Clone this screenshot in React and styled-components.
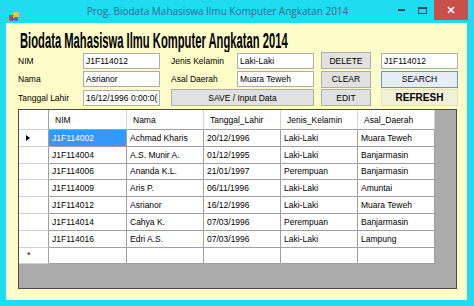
import React from 'react';
import styled, { createGlobalStyle } from 'styled-components';

const GlobalStyle = createGlobalStyle`
  html, body { margin: 0; padding: 0; }
  body {
    background: #1fdcf2;
    font-family: "Liberation Sans", Arial, sans-serif;
    overflow: hidden;
  }
`;

const columns = ['NIM', 'Nama', 'Tanggal_Lahir', 'Jenis_Kelamin', 'Asal_Daerah'];

const rows = [
    ['J1F114002', 'Achmad Kharis', '20/12/1996', 'Laki-Laki', 'Muara Teweh'],
    ['J1F114004', 'A.S. Munir A.', '01/12/1995', 'Laki-Laki', 'Banjarmasin'],
    ['J1F114006', 'Ananda K.L.', '21/01/1997', 'Perempuan', 'Banjarmasin'],
    ['J1F114009', 'Aris P.', '06/11/1996', 'Laki-Laki', 'Amuntai'],
    ['J1F114012', 'Asrianor', '16/12/1996', 'Laki-Laki', 'Muara Teweh'],
    ['J1F114014', 'Cahya K.', '07/03/1996', 'Perempuan', 'Banjarmasin'],
    ['J1F114016', 'Edri A.S.', '07/03/1996', 'Laki-Laki', 'Lampung'],
];

const AppIcon = () => (
    <svg width="10" height="10" viewBox="0 0 10 10">
        <rect x="0" y="3" width="5" height="5" fill="#d0463c" />
        <rect x="4" y="0" width="6" height="6" fill="#f2c230" />
        <rect x="5" y="5" width="4" height="4" fill="#3a78d0" />
        <rect x="1" y="6" width="3" height="3" fill="#7a4fb0" />
    </svg>
);

const App = () => {
    return (
        <>
            <GlobalStyle />
            <Window>
                <TitleBar>
                    <IconSlot><AppIcon /></IconSlot>
                    <Title>Prog. Biodata Mahasiswa Ilmu Komputer Angkatan 2014</Title>
                    <Controls>
                        <CtrlButton>
                            <svg width="7" height="3"><rect x="0" y="0" width="7" height="2" fill="#1d4a66" /></svg>
                        </CtrlButton>
                        <CtrlButton>
                            <svg width="9" height="7">
                                <rect x="0.5" y="0.5" width="8" height="6" fill="none" stroke="#1d4a66" />
                                <rect x="0" y="0" width="9" height="2" fill="#1d4a66" />
                            </svg>
                        </CtrlButton>
                        <CloseButton>
                            <svg width="8" height="8" viewBox="0 0 8 8">
                                <path d="M1 1 L7 7 M7 1 L1 7" stroke="#fff" strokeWidth="1.6" />
                            </svg>
                        </CloseButton>
                    </Controls>
                </TitleBar>

                <Client>
                    <Heading><span>Biodata Mahasiswa Ilmu Komputer Angkatan 2014</span></Heading>

                    <Form>
                        <Label>NIM</Label>
                        <TextBox col={2}>J1F114012</TextBox>
                        <Label col={4}>Jenis Kelamin</Label>
                        <TextBox col={5}>Laki-Laki</TextBox>
                        <Button col={7}>DELETE</Button>
                        <TextBox col={9}>J1F114012</TextBox>

                        <Label>Nama</Label>
                        <TextBox col={2}>Asrianor</TextBox>
                        <Label col={4}>Asal Daerah</Label>
                        <TextBox col={5}>Muara Teweh</TextBox>
                        <Button col={7}>CLEAR</Button>
                        <Button col={9} focused>SEARCH</Button>

                        <Label>Tanggal Lahir</Label>
                        <TextBox col={2}>16/12/1996 0:00:0(</TextBox>
                        <Button col={4} span={2}>SAVE / Input Data</Button>
                        <Button col={7}>EDIT</Button>
                        <Button col={9} bold>REFRESH</Button>
                    </Form>

                    <DataGrid>
                        <HeaderRow>
                            <RowHeader />
                            {columns.map(c => <HeaderCell key={c}>{c}</HeaderCell>)}
                        </HeaderRow>
                        {rows.map((r, i) => (
                            <Row key={r[0]}>
                                <RowHeader>{i === 0 && <Arrow />}</RowHeader>
                                {r.map((v, j) => (
                                    <Cell key={j} selected={i === 0 && j === 0}>{v}</Cell>
                                ))}
                            </Row>
                        ))}
                        <Row>
                            <RowHeader><Star>*</Star></RowHeader>
                            {columns.map(c => <Cell key={c} />)}
                        </Row>
                    </DataGrid>
                </Client>
            </Window>
        </>
    );
};

export default App;

const Window = styled.div`
    width: 474px;
    height: 306px;
    display: flex;
    flex-direction: column;
    background: #1fdcf2;
    overflow: hidden;
`;

const TitleBar = styled.div`
    height: 23px;
    display: flex;
    align-items: flex-start;
`;

const IconSlot = styled.div`
    width: 10px;
    height: 10px;
    margin: 8px 0 0 9px;
`;

const Title = styled.div`
    flex: 1;
    text-align: center;
    font-family: "Open Sans", "Liberation Sans", sans-serif;
    font-size: 10px;
    line-height: 23px;
    color: #2a6f8c;
    padding-left: 24px;
    white-space: nowrap;
`;

const Controls = styled.div`
    display: flex;
    align-items: flex-start;
    margin-right: 6px;
`;

const CtrlButton = styled.div`
    width: 19px;
    height: 20px;
    display: flex;
    align-items: center;
    justify-content: center;
    margin-right: 2px;
`;

const CloseButton = styled.div`
    width: 34px;
    height: 20px;
    background: #c9504a;
    display: flex;
    align-items: center;
    justify-content: center;
`;

const Client = styled.div`
    flex: 1;
    margin: 0 7px 6px 6px;
    background: #fefdc9;
    padding: 6px 0 0 12px;
    display: flex;
    flex-direction: column;
`;

const Heading = styled.div`
    height: 23px;
    padding-left: 2px;
    white-space: nowrap;
    overflow: hidden;
    > span {
        display: inline-block;
        font-family: "Liberation Sans Narrow", "Liberation Sans", sans-serif;
        font-weight: bold;
        font-size: 22px;
        line-height: 23px;
        color: #000;
        transform: scaleX(0.51);
        transform-origin: left center;
    }
`;

const Form = styled.div`
    display: grid;
    grid-template-columns: 65px 77px 11px 66px 77px 7px 50px 10px 77px;
    grid-template-rows: repeat(3, 17px);
    row-gap: 1.5px;
    font-size: 8.5px;
`;

const Label = styled.div`
    grid-column: ${p => p.col || 1};
    display: flex;
    align-items: center;
    color: #000;
    white-space: nowrap;
`;

const TextBox = styled.div`
    grid-column: ${p => p.col};
    align-self: center;
    height: 14px;
    background: #fff;
    border: 1px solid #abadb3;
    display: flex;
    align-items: center;
    padding-left: 2px;
    overflow: hidden;
    white-space: nowrap;
    color: #000;
`;

const Button = styled.div`
    grid-column: ${p => p.col} / span ${p => p.span || 1};
    background: ${p => (p.bold ? '#f3f2d6' : p.focused ? '#e5eef7' : '#e1e1e1')};
    border: 1px solid ${p => (p.focused ? '#5a9ad2' : p.bold ? '#e0dfc4' : '#adadad')};
    display: flex;
    align-items: center;
    justify-content: center;
    font-weight: ${p => (p.bold ? 'bold' : 'normal')};
    font-size: ${p => (p.bold ? '10px' : '8.5px')};
    color: #000;
`;

const DataGrid = styled.div`
    margin: 3px 0 11px 0;
    width: 437px;
    flex: 1;
    background: #ababab;
    border: 1px solid #4a4a4a;
    font-size: 8.5px;
    display: flex;
    flex-direction: column;
`;

const gridCols = '30px 78px 77px 77px 77px 77px';

const HeaderRow = styled.div`
    display: grid;
    grid-template-columns: ${gridCols};
    height: 20px;
`;

const Row = styled.div`
    display: grid;
    grid-template-columns: ${gridCols};
    height: 16.8px;
`;

const RowHeader = styled.div`
    background: #fff;
    border-right: 1px solid #a0a0a0;
    border-bottom: 1px solid #d2d2d2;
    display: flex;
    align-items: center;
    padding-left: 6px;
`;

const HeaderCell = styled.div`
    background: #fff;
    border-right: 1px solid #d2d2d2;
    border-bottom: 1px solid #a0a0a0;
    display: flex;
    align-items: center;
    padding-left: 6px;
    color: #000;
    white-space: nowrap;
`;

const Cell = styled.div`
    background: ${p => (p.selected ? '#3399ff' : '#fff')};
    color: ${p => (p.selected ? '#fff' : '#000')};
    border-right: 1px solid #a0a0a0;
    border-bottom: 1px solid #a0a0a0;
    display: flex;
    align-items: center;
    padding-left: 3px;
    white-space: nowrap;
    overflow: hidden;
`;

const Arrow = styled.div`
    width: 0;
    height: 0;
    border-top: 3.5px solid transparent;
    border-bottom: 3.5px solid transparent;
    border-left: 4px solid #000;
    margin-left: 1px;
`;

const Star = styled.span`
    font-size: 9px;
    margin-left: 2px;
    color: #000;
`;
